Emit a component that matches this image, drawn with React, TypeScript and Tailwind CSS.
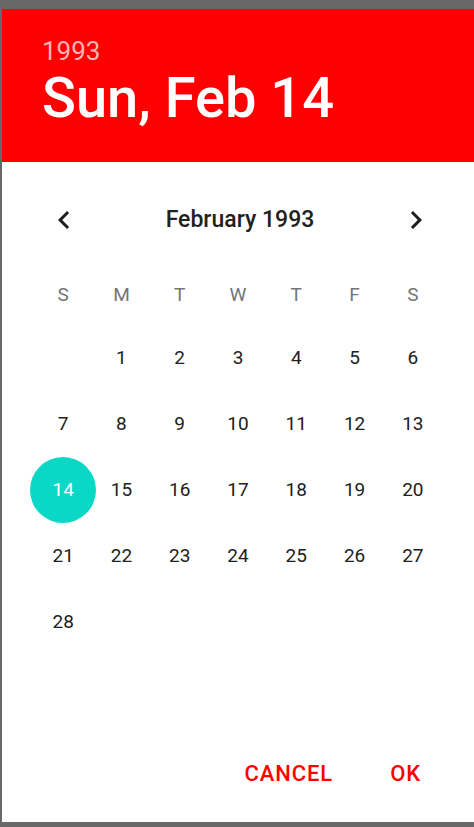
import React from 'react';

const WEEKDAYS = ['S', 'M', 'T', 'W', 'T', 'F', 'S'];

// February 1993 starts on a Monday
const CELLS: (number | null)[] = [null, ...Array.from({ length: 28 }, (_, i) => i + 1)];
while (CELLS.length < 35) CELLS.push(null);

const SELECTED = 14;

function Chevron({ dir }: { dir: 'left' | 'right' }) {
  return (
    <svg width="36" height="36" viewBox="0 0 24 24" fill="#1f1f1f">
      {dir === 'left' ? (
        <path d="M15.41 7.41L14 6l-6 6 6 6 1.41-1.41L10.83 12z" />
      ) : (
        <path d="M8.59 16.59L10 18l6-6-6-6-1.41 1.41L13.17 12z" />
      )}
    </svg>
  );
}

export default function App() {
  return (
    <div
      className="w-[474px] h-[827px] bg-[#686868] pt-[9px] pl-[2px] pb-[5px] overflow-hidden"
      style={{ fontFamily: 'Roboto, "Noto Sans", sans-serif' }}
    >
      <div className="h-full bg-white flex flex-col">
        {/* Header */}
        <div className="h-[153px] shrink-0 bg-[#ff0000] pl-[40px] pt-[27px]">
          <div className="text-[26px] leading-[30px] text-[#ffb3b3]">1993</div>
          <div className="text-[56px] leading-[64px] font-medium text-white">Sun, Feb 14</div>
        </div>

        {/* Month nav */}
        <div className="mt-[30px] h-[56px] grid grid-cols-[48px_1fr_48px] items-center pl-[38px] pr-[34px]">
          <button className="w-12 h-12 flex items-center justify-center">
            <Chevron dir="left" />
          </button>
          <div className="text-center text-[23px] font-medium text-[#212121]">February 1993</div>
          <button className="w-12 h-12 flex items-center justify-center">
            <Chevron dir="right" />
          </button>
        </div>

        {/* Calendar */}
        <div className="px-[32px] mt-[18px]">
          <div className="grid grid-cols-7 h-[59px] items-center">
            {WEEKDAYS.map((d, i) => (
              <div key={i} className="text-center text-[19px] text-[#757575]">
                {d}
              </div>
            ))}
          </div>
          <div className="grid grid-cols-7">
            {CELLS.map((n, i) => (
              <div key={i} className="h-[66px] flex items-center justify-center">
                {n === SELECTED ? (
                  <div className="w-[66px] h-[66px] shrink-0 rounded-full bg-[#0ad8c6] flex items-center justify-center text-[19px] text-white">
                    {n}
                  </div>
                ) : n ? (
                  <span className="text-[19px] text-[#212121]">{n}</span>
                ) : null}
              </div>
            ))}
          </div>
        </div>

        <div className="flex-1" />

        {/* Actions */}
        <div className="h-[56px] mb-[21px] flex items-center justify-end gap-[57px] pr-[53px]">
          <button className="text-[22px] tracking-[0.9px] font-medium text-[#ff0000]">CANCEL</button>
          <button className="text-[22px] tracking-[0.9px] font-medium text-[#ff0000]">OK</button>
        </div>
      </div>
    </div>
  );
}
